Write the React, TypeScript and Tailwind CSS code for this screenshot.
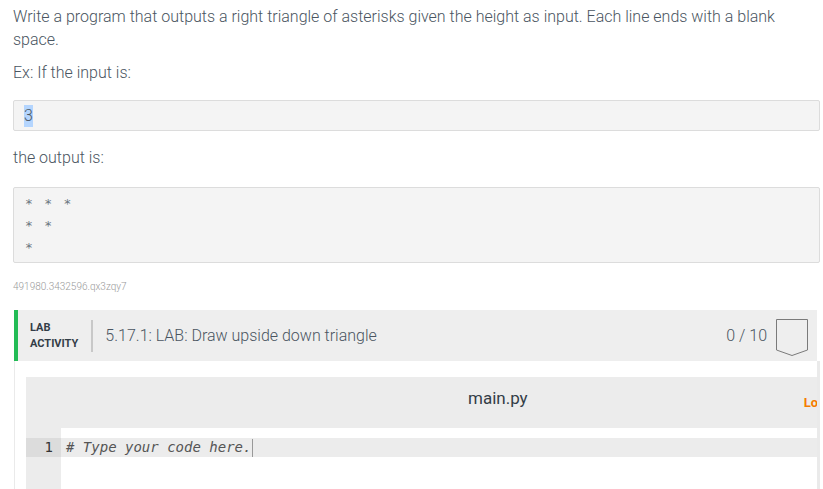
export default function App() {
  const rows = ['* * * ', '* * ', '* '];

  return (
    <div className="min-h-screen bg-white pl-[13px] pr-[3px] pt-[5px] font-['Roboto',sans-serif] text-[#4a5561]">
      {/* Prompt */}
      <p className="text-[16px] font-light leading-[23px]">
        Write a program that outputs a right triangle of asterisks given the height as input. Each line ends with a blank
        space.
      </p>
      <p className="mt-[10px] text-[16px] font-light leading-[23px]">Ex: If the input is:</p>

      <div className="mt-[16px] flex h-[31px] items-center rounded-[2px] border border-[#dcdcdc] bg-[#f4f4f4] px-[10px] font-['DejaVu_Sans_Mono',monospace] text-[16px]">
        <span className="inline-block h-[22px] bg-[#b4d5fe] font-['Roboto',sans-serif] font-light leading-[22px] text-[#4a5561]">
          3
        </span>
      </div>

      <p className="mt-[15px] text-[16px] font-light leading-[23px]">the output is:</p>

      <div className="mt-[18px] rounded-[2px] border border-[#dcdcdc] bg-[#f4f4f4] pl-[11px] pb-[3px] pt-[5px] font-['DejaVu_Sans_Mono',monospace] text-[13px] leading-[22px] tracking-[1.8px] text-[#6b7680]">
        {rows.map((r, i) => (
          <div key={i} className="whitespace-pre">
            {r}
          </div>
        ))}
      </div>

      <div className="mt-[17px] text-[10px] font-light leading-[14px] text-[#9a9a9a]">491980.3432596.qx3zqy7</div>

      {/* Lab activity */}
      <div className="mt-[16px] ml-[1px]">
        <div className="mr-[3px] flex h-[51px] items-center border-l-4 border-[#22bb55] bg-[#eeeeee] pl-[12px] pr-[9px]">
          <div className="text-[11px] font-bold leading-[16px] text-[#333d47]">
            <div>LAB</div>
            <div>ACTIVITY</div>
          </div>
          <div className="ml-[13px] h-[32px] w-[2px] bg-[#c8c8c8]" />
          <div className="ml-[12px] text-[16px] font-light text-[#4a5561]">5.17.1: LAB: Draw upside down triangle</div>
          <div className="ml-auto flex items-center gap-[9px]">
            <span className="text-[16px] font-light text-[#4a5561]">0 / 10</span>
            <svg width="32" height="37" viewBox="0 0 32 37" className="mt-[4px]">
              <path d="M0.5 0.5 H31.5 V31 L16 36.5 L0.5 31 Z" fill="none" stroke="#7a7a7a" strokeWidth="1" />
            </svg>
          </div>
        </div>

        <div className="h-[128px] border-l border-r-[3px] border-[#eaeaea] pl-[11px] pt-[16px]">
          {/* Editor */}
          <div className="h-full overflow-hidden">
            <div className="flex h-[51px] items-center overflow-hidden whitespace-nowrap bg-[#ececec]">
              <span className="mb-[8px] ml-[442px] text-[17px] text-[#333d47]">main.py</span>
              <span className="ml-[276px] text-[13px] font-bold text-[#f57c00]">Load default template...</span>
            </div>
            <div className="flex h-full">
              <div className="w-[35px] shrink-0 bg-[#ececec] pt-[10px]">
                <div className="h-[19px] bg-[#dcdcdc] pr-[8px] text-right font-['DejaVu_Sans_Mono',monospace] text-[14px] leading-[19px] text-[#333]">
                  1
                </div>
              </div>
              <div className="flex-1 pt-[10px]">
                <div className="flex h-[19px] items-center bg-[#ececec] pl-[5px] font-['DejaVu_Sans_Mono',monospace] text-[14px] italic leading-[19px] text-[#555]">
                  <span className="whitespace-pre"># Type your code here.</span>
                  <span className="ml-[1px] h-[18px] w-[1px] bg-[#999]" />
                </div>
              </div>
            </div>
          </div>
        </div>
      </div>
    </div>
  );
}
